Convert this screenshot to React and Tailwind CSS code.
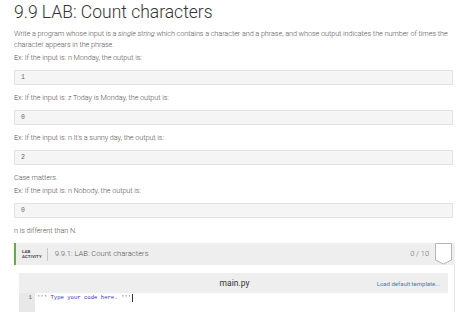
import React from "react";

const EXAMPLES = [
  { input: "n Monday", output: "1" },
  { input: "z Today is Monday", output: "0" },
  { input: "n It's a sunny day", output: "2" },
];

const OutputBox = ({ value }) => (
  <div className="w-[439px] h-[15px] mt-[7px] mb-[7px] flex items-center pl-[6px] bg-[#f5f5f5] border border-[#e3e3e3] text-[6.5px] text-[#666] font-['Liberation_Mono',monospace]">
    {value}
  </div>
);

const ExampleLine = ({ input }) => (
  <p className="leading-[11px]">
    Ex: If the input is: {input}, the output is:
  </p>
);

const Badge = () => (
  <svg width="17" height="22" viewBox="0 0 17 22" className="ml-[6px]">
    <path d="M0.5 0.5 H16.5 V17 L8.5 21 L0.5 17 Z" fill="#fff" stroke="#b5b5b5" strokeWidth="1" />
  </svg>
);

export default function App() {
  return (
    <div className="w-[474px] h-[312px] overflow-hidden bg-white font-['Roboto',sans-serif] font-light text-[#555] text-[7.3px] tracking-[-0.08px] pl-[14px]">
      <h1 className="text-[17.5px] leading-[24px] text-[#333] font-light tracking-normal">
        9.9 LAB: Count characters
      </h1>
      <p className="w-[441px] leading-[11px] mt-[4px] mb-[2px]">
        Write a program whose input is a <em>single string</em> which contains a character and a phrase, and whose output indicates the number of times the character appears in the phrase.
      </p>
      {EXAMPLES.map((ex) => (
        <div key={ex.input}>
          <ExampleLine input={ex.input} />
          <OutputBox value={ex.output} />
        </div>
      ))}
      <p className="leading-[11px] mb-[2px]">Case matters.</p>
      <ExampleLine input="n Nobody" />
      <OutputBox value="0" />
      <p className="leading-[11px]">n is different than N.</p>

      <div className="w-[441px] mt-[7px] tracking-normal">
        <div className="h-[22px] flex items-center bg-[#eeeeee] border-l-2 border-[#6aa84f]">
          <div className="pl-[6px] pr-[5px] text-[4.3px] leading-[5px] font-bold text-[#444] tracking-[0.1px]">
            <div>LAB</div>
            <div>ACTIVITY</div>
          </div>
          <div className="w-px h-[13px] bg-[#c8c8c8]" />
          <div className="pl-[7px] text-[7.6px] text-[#555] flex-1">9.9.1: LAB: Count characters</div>
          <div className="text-[7.4px] text-[#666]">0 / 10</div>
          <Badge />
          <div className="w-[3px]" />
        </div>
        <div className="h-[60px] border-r border-[#e6e6e6] pl-[5px] pr-[6px] pt-[8px]">
          <div className="h-[20px] bg-[#eeeeee] flex items-center relative">
            <div className="flex-1 text-center text-[8.5px] font-normal text-[#333] pl-[2px]">main.py</div>
            <div className="absolute right-[8px] text-[6px] font-normal text-[#3a7fc1]">Load default template...</div>
          </div>
          <div className="flex h-[40px]">
            <div className="w-[16px] bg-[#e8e8e8] flex flex-col">
              <div className="h-[10px] text-right pr-[3px] text-[5.8px] text-[#666] font-['Liberation_Mono',monospace] leading-[10px]">1</div>
            </div>
            <div className="flex-1 pl-[2px]">
              <div className="h-[10px] flex items-center text-[5.6px] text-[#3333bb] font-['Liberation_Mono',monospace] whitespace-pre">
                ''' Type your code here. '''<span className="inline-block w-px h-[8px] bg-[#333] ml-[1px]" />
              </div>
            </div>
          </div>
        </div>
      </div>
    </div>
  );
}
